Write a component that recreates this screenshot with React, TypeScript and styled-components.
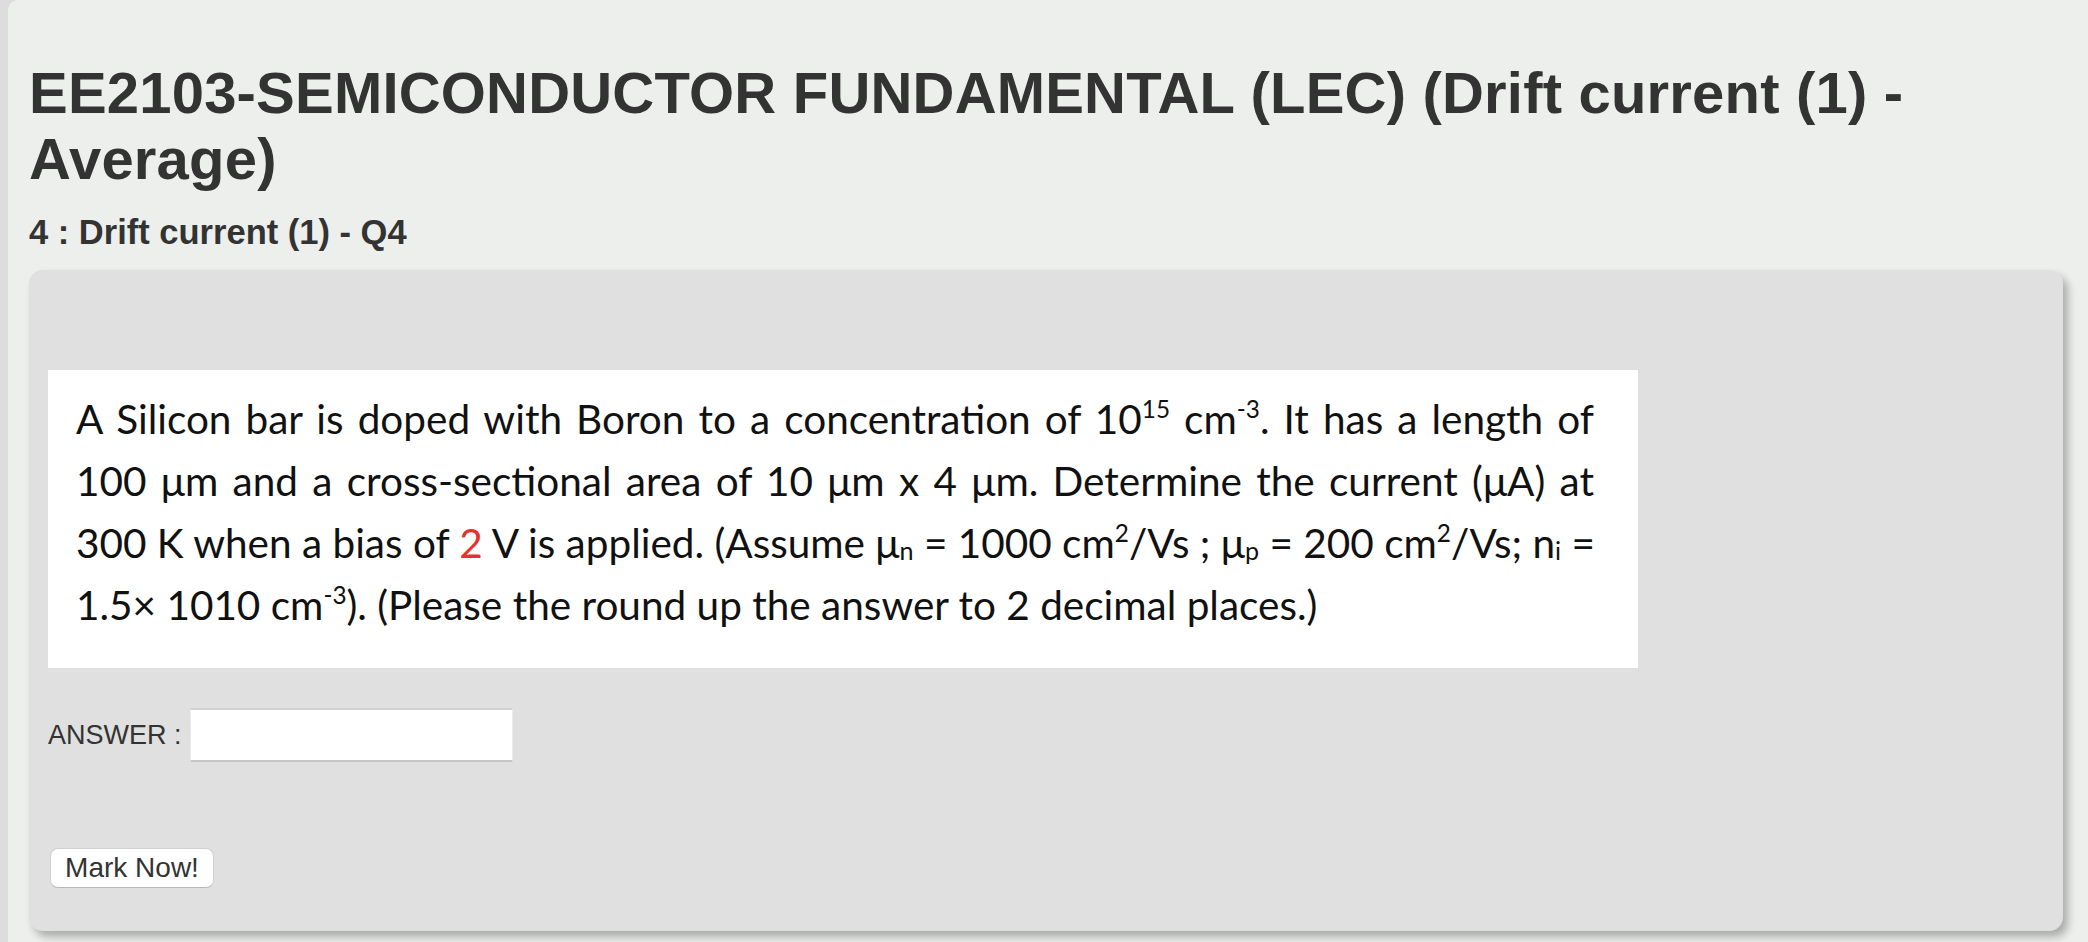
import React from 'react';
import styled, { createGlobalStyle } from 'styled-components';

const GlobalStyle = createGlobalStyle`
  html, body {
    margin: 0;
    padding: 0;
    background: #dcdddc;
    overflow: hidden;
  }
`;

const S = {
  Page: styled.div`
    margin-left: 8px;
    min-height: 100vh;
    box-sizing: border-box;
    padding: 60px 25px 0 21px;
    background: #ecefec;
    border-top-left-radius: 10px;
    font-family: 'Liberation Sans', Arial, sans-serif;
    color: #333;
  `,

  Title: styled.h1`
    margin: 0;
    font-size: 58px;
    line-height: 66px;
    font-weight: 700;
    letter-spacing: 0.2px;
  `,

  Subtitle: styled.h3`
    margin: 20px 0 0;
    font-size: 34.5px;
    line-height: 40px;
    font-weight: 700;
  `,

  Card: styled.div`
    margin-top: 18px;
    box-sizing: border-box;
    height: 661px;
    padding: 100px 19px 43px;
    background: #dfe0df;
    border-radius: 14px;
    box-shadow: 5px 6px 9px rgba(0, 0, 0, 0.28);
    display: flex;
    flex-direction: column;
    align-items: flex-start;
  `,

  Question: styled.div`
    box-sizing: border-box;
    width: 1590px;
    height: 298px;
    padding: 18px 44px 0 28px;
    background: #fff;
    font-family: Lato, 'Open Sans', sans-serif;
    font-size: 40.5px;
    line-height: 62px;
    color: #111;
  `,

  Line: styled.div<{ $justify?: boolean }>`
    white-space: nowrap;
    text-align: ${(p) => (p.$justify ? 'justify' : 'left')};
    text-align-last: ${(p) => (p.$justify ? 'justify' : 'left')};
  `,

  Sup: styled.sup`
    font-size: 0.6em;
    vertical-align: baseline;
    position: relative;
    top: -0.65em;
    line-height: 0;
  `,

  Sub: styled.sub`
    font-size: 0.62em;
    vertical-align: baseline;
    position: relative;
    top: 0.08em;
    line-height: 0;
  `,

  Red: styled.span`
    color: #e8312c;
  `,

  AnswerRow: styled.div`
    margin-top: 40px;
    display: flex;
    align-items: center;
    gap: 8px;
  `,

  Label: styled.label`
    font-size: 27px;
    color: #333;
  `,

  Input: styled.input`
    box-sizing: border-box;
    width: 323px;
    height: 54px;
    border: none;
    border-top: 2px solid #d2d2d2;
    border-bottom: 2px solid #c6c6c6;
    border-left: 1px solid #ececec;
    border-right: 1px solid #ececec;
    background: #fff;
    outline: none;
  `,

  Button: styled.button`
    margin-top: 86px;
    margin-left: 2px;
    box-sizing: border-box;
    width: 164px;
    height: 40px;
    padding: 0;
    background: #fff;
    border: 1px solid #d0d0d0;
    border-bottom-color: #b8b8b8;
    border-radius: 8px;
    font-family: 'Liberation Sans', Arial, sans-serif;
    font-size: 28px;
    color: #333;
  `,
};

const App = () => (
  <>
    <GlobalStyle />
    <S.Page>
      <S.Title>EE2103-SEMICONDUCTOR FUNDAMENTAL (LEC) (Drift current (1) - Average)</S.Title>
      <S.Subtitle>4 : Drift current (1) - Q4</S.Subtitle>

      <S.Card>
        <S.Question>
          <S.Line $justify>
            A Silicon bar is doped with Boron to a concentration of 10<S.Sup>15</S.Sup> cm<S.Sup>-3</S.Sup>. It has a length of
          </S.Line>
          <S.Line $justify>
            100 μm and a cross-sectional area of 10 μm x 4 μm. Determine the current (μA) at
          </S.Line>
          <S.Line $justify>
            300 K when a bias of <S.Red>2</S.Red> V is applied. (Assume μ<S.Sub>n</S.Sub> = 1000 cm<S.Sup>2</S.Sup>/Vs ; μ<S.Sub>p</S.Sub> = 200 cm<S.Sup>2</S.Sup>/Vs; n<S.Sub>i</S.Sub> =
          </S.Line>
          <S.Line>
            1.5× 1010 cm<S.Sup>-3</S.Sup>). (Please the round up the answer to 2 decimal places.)
          </S.Line>
        </S.Question>

        <S.AnswerRow>
          <S.Label>ANSWER :</S.Label>
          <S.Input type="text" />
        </S.AnswerRow>

        <S.Button>Mark Now!</S.Button>
      </S.Card>
    </S.Page>
  </>
);

export default App;
